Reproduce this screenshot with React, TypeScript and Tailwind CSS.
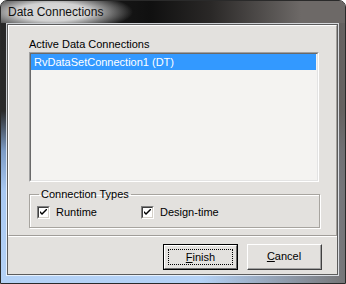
import React from "react";

const Check = () => (
  <svg width="7" height="7" viewBox="0 0 7 7" className="block">
    <path d="M0 2 L0 4 L2 6 L7 1 L7 -1 L2 4 Z" fill="#000" />
  </svg>
);

const CheckBox = ({ label }: { label: string }) => (
  <div className="flex items-center gap-[6px]">
    <div className="w-[13px] h-[13px] border-t border-l border-[#808080] border-r border-b border-r-white border-b-white">
      <div className="w-[11px] h-[11px] border-t border-l border-[#404040] border-r border-b border-r-[#d4d0c8] border-b-[#d4d0c8] bg-white flex items-center justify-center">
        <Check />
      </div>
    </div>
    <span>{label}</span>
  </div>
);

export default function App() {
  return (
    <div
      className="w-[346px] h-[284px] flex flex-col border border-[#2a2a2a] rounded-t-[7px] overflow-hidden text-black"
      style={{ fontFamily: '"Liberation Sans", Arial, sans-serif' }}
    >
      <div className="flex-1 flex flex-col bg-[linear-gradient(to_right,transparent_0px,transparent_200px,rgba(110,106,104,0.9)_346px),linear-gradient(to_bottom,#262626_0px,#2a2a2a_110px,#7d9cc6_150px,#a8c8f2_190px,#b5d2f6_284px)]">
        <div className="h-[22px] flex items-center pl-[7px] bg-[radial-gradient(ellipse_80px_20px_at_52px_11px,#dcdcdc_0%,#d2d2d2_45%,rgba(190,190,190,0.6)_70%,rgba(20,20,20,0)_100%),linear-gradient(to_right,#2a2a2a_0px,#101010_150px,#2a2827_210px,#6d6967_300px,#6d6967_346px)]">
          <span className="text-[12px] leading-[14px] text-[#111]" style={{ fontFamily: '"Liberation Sans", Arial, sans-serif' }}>
            Data Connections
          </span>
        </div>
        <div className="flex-1 ml-[5px] mr-[6px] mb-[7px] border border-[#f4f8fc]/80">
          <div className="h-full border border-[#5c5c5c] bg-[#e3e1de] flex flex-col text-[11px] leading-[13px]">
            <div className="h-[211px] border-l border-t border-l-white border-t-white border-r border-b border-r-[#a09d99] border-b-[#a09d99] pl-[20px] pt-[12px] flex flex-col">
              <div className="h-[13px]">Active Data Connections</div>
              <div className="mt-[1px] w-[290px] h-[130px] border-t border-l border-[#a0a0a0] border-r border-b border-r-white border-b-white">
                <div className="h-full border-t border-l border-[#696969] border-r border-b border-r-[#e3e3e3] border-b-[#e3e3e3] bg-[#f4f3f1]">
                  <div className="h-[16px] bg-[#3399ff] text-white pl-[3px] flex items-center mr-[1px]">
                    RvDataSetConnection1 (DT)
                  </div>
                </div>
              </div>
              <fieldset className="mt-[6px] w-[291px] h-[40px] border border-[#a7a49f] shadow-[inset_1px_1px_0_white,1px_1px_0_white] px-[9px] pt-[5px]">
                <legend className="px-[2px]">Connection Types</legend>
                <div className="flex items-center -ml-[2px]">
                  <div className="w-[104px]">
                    <CheckBox label="Runtime" />
                  </div>
                  <CheckBox label="Design-time" />
                </div>
              </fieldset>
            </div>
            <div className="flex-1 border-t border-white flex justify-end items-start pt-[7px] pr-[15px] gap-[9px]">
              <div className="w-[75px] h-[26px] border border-black">
                <div className="h-full border-t border-l border-white border-r border-b border-r-[#696969] border-b-[#696969] flex items-center justify-center p-[3px]">
                  <div className="w-full h-full border border-dotted border-black flex items-center justify-center">
                    <span><span className="underline">F</span>inish</span>
                  </div>
                </div>
              </div>
              <div className="w-[75px] h-[26px] border-t border-l border-white border-r border-b border-r-[#404040] border-b-[#404040]">
                <div className="h-full border-r border-b border-[#a0a0a0] flex items-center justify-center">
                  <span><span className="underline">C</span>ancel</span>
                </div>
              </div>
            </div>
          </div>
        </div>
      </div>
    </div>
  );
}
